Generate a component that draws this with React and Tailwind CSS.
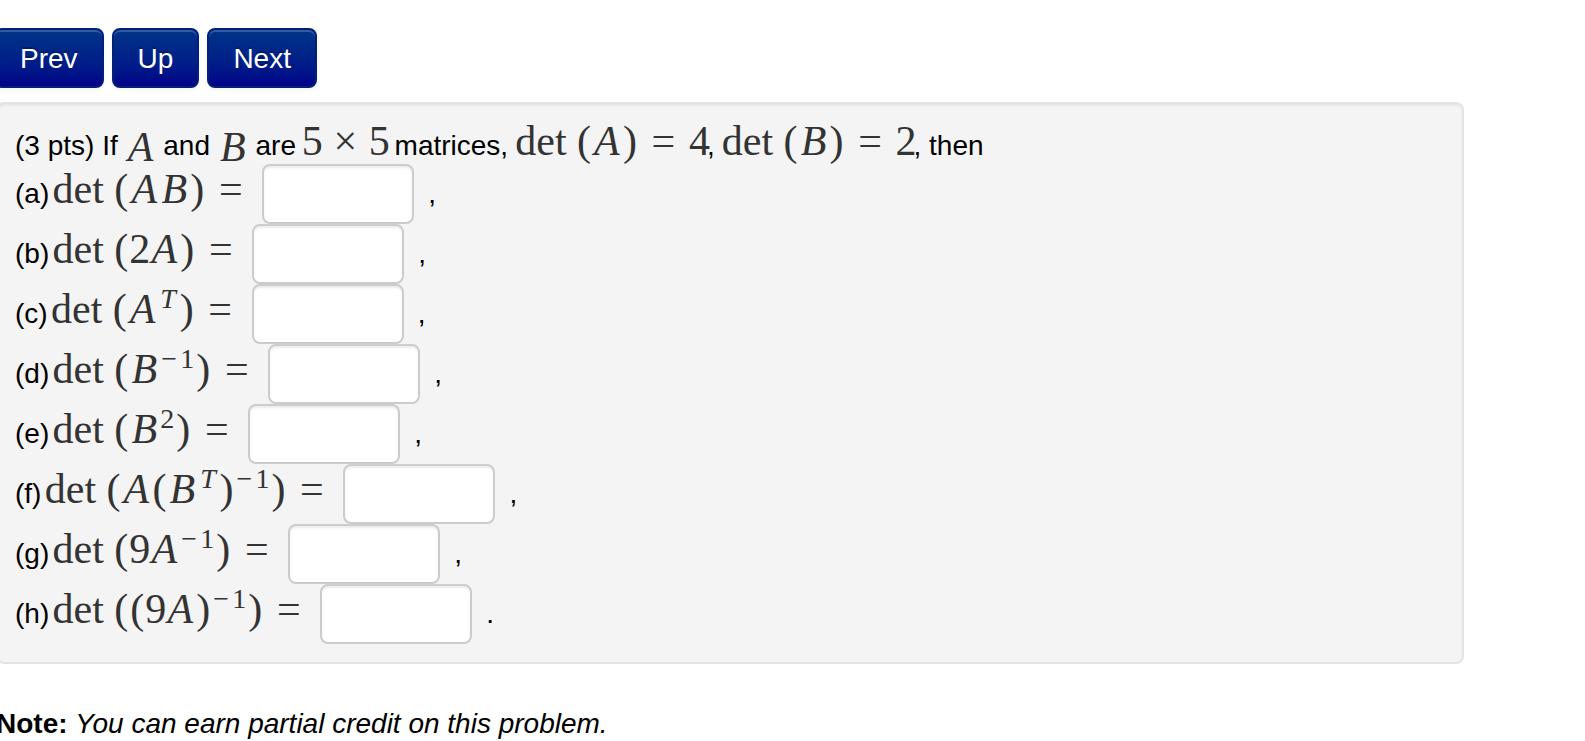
import React from "react";

const tokenStyles = {
  fn: "w-[54px] mr-2 text-center",
  paren: "w-4 text-center",
  letter: "w-[30px] text-center italic",
  digit: "w-5 text-center",
  rel: "w-[31px] mx-[10px] text-center",
  relEnd: "w-[31px] ml-[10px] text-center",
  bin: "w-[31px] mx-2 text-center",
};

const supStyles = {
  letter: "w-[21px] text-center italic",
  digit: "w-4 text-center",
  minus: "w-5 text-center",
};

const mathStyles = {
  low: "align-[-6px]",
  tight: "-mx-0.5",
  plain: "",
};

function T({ kind, children }) {
  return <span className={`inline-block ${tokenStyles[kind]}`}>{children}</span>;
}

function Sup({ kind, children }) {
  return (
    <span className={`inline-block align-[15px] text-[28px] leading-[24px] ${supStyles[kind]}`}>
      {children}
    </span>
  );
}

function MathText({ variant = "plain", children }) {
  return (
    <span
      className={`inline-block whitespace-nowrap font-['Liberation_Serif',serif] text-[42px] leading-[40px] text-[#333333] ${mathStyles[variant]}`}
    >
      {children}
    </span>
  );
}

const Det = () => <T kind="fn">det</T>;
const L = () => <T kind="paren">(</T>;
const R = () => <T kind="paren">)</T>;
const A = () => <T kind="letter">A</T>;
const B = () => <T kind="letter">B</T>;
const Inv = () => <><Sup kind="minus">−</Sup><Sup kind="digit">1</Sup></>;

const parts = [
  { id: "a", body: <><A /><B /></> },
  { id: "b", body: <><T kind="digit">2</T><A /></> },
  { id: "c", body: <><A /><Sup kind="letter">T</Sup></> },
  { id: "d", body: <><B /><Inv /></> },
  { id: "e", body: <><B /><Sup kind="digit">2</Sup></> },
  { id: "f", body: <><A /><L /><B /><Sup kind="letter">T</Sup><R /><Inv /></> },
  { id: "g", body: <><T kind="digit">9</T><A /><Inv /></> },
  { id: "h", body: <><L /><T kind="digit">9</T><A /><R /><Inv /></>, end: "." },
];

function NavButton({ children }) {
  return (
    <button
      type="button"
      className="h-[60px] rounded-lg border-2 border-[#00207a] bg-linear-to-b from-[#003388] to-[#000088] px-6 pt-0.5 text-[28px] leading-[40px] text-white shadow-[inset_0_2px_0_rgba(255,255,255,0.2),0_2px_4px_rgba(0,0,0,0.05)] [text-shadow:0_-2px_0_rgba(0,0,0,0.25)]"
    >
      {children}
    </button>
  );
}

export default function App() {
  return (
    <main className="min-h-screen overflow-x-hidden bg-white font-['Liberation_Sans',Arial,sans-serif] text-[28px] leading-[40px] text-black">
      <div className="-ml-1 pt-7 pr-[121px]">
        <nav className="-ml-0.5 flex gap-2">
          <NavButton>Prev</NavButton>
          <NavButton>Up</NavButton>
          <NavButton>Next</NavButton>
        </nav>

        <section className="mt-[14px] rounded-lg border-2 border-[#e3e3e3] bg-[#f4f4f4] px-[17px] pt-[17px] pb-[18px] shadow-[inset_0_2px_2px_rgba(0,0,0,0.05)]">
          <p className="h-[43px]">
            (3 pts) If <MathText variant="low"><A /></MathText> and{" "}
            <MathText variant="low"><B /></MathText> are{" "}
            <MathText variant="tight">
              <T kind="digit">5</T>
              <T kind="bin">×</T>
              <T kind="digit">5</T>
            </MathText>{" "}
            matrices,{" "}
            <MathText variant="tight">
              <Det /><L /><A /><R /><T kind="rel">=</T><T kind="digit">4</T>
            </MathText>
            ,{" "}
            <MathText variant="tight">
              <Det /><L /><B /><R /><T kind="rel">=</T><T kind="digit">2</T>
            </MathText>
            , then
          </p>
          {parts.map(({ id, body, end = "," }) => (
            <div key={id} className="flex h-[60px] items-baseline">
              <label htmlFor={`answer-${id}`} className="flex items-baseline gap-0.5">
                <span>({id})</span>
                <MathText>
                  <Det /><L />{body}<R /><T kind="relEnd">=</T>
                </MathText>
              </label>
              <input
                id={`answer-${id}`}
                type="text"
                className="ml-4 h-[60px] w-[152px] rounded-lg border-2 border-[#cccccc] bg-white px-3 text-[28px] shadow-[inset_0_2px_2px_rgba(0,0,0,0.075)] outline-none"
              />
              <span className="ml-[14px]">{end}</span>
            </div>
          ))}
        </section>

        <p className="mt-9 py-1">
          <b>Note:</b> <i>You can earn partial credit on this problem.</i>
        </p>
      </div>
    </main>
  );
}
